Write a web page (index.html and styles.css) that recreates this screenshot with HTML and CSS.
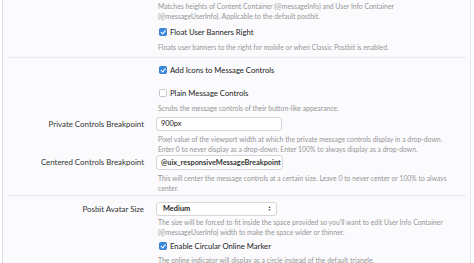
FILE: index.html
```html
<!DOCTYPE html>
<html>
<head>
<meta charset="utf-8">
<link rel="stylesheet" href="styles.css">
</head>
<body>
<div class="panel">
  <section class="block first">
    <div class="row">
      <div class="label"></div>
      <div class="field">
        <p class="hint">Matches heights of Content Container (@messageInfo) and User Info Container<br>(@messageUserInfo). Applicable to the default postbit.</p>
        <div class="check gap6"><span class="box on"></span>Float User Banners Right</div>
        <p class="hint gap5">Floats user banners to the right for mobile or when Classic Postbit is enabled.</p>
      </div>
    </div>
  </section>
  <section class="block second">
    <div class="row">
      <div class="label"></div>
      <div class="field">
        <div class="check"><span class="box on"></span>Add Icons to Message Controls</div>
        <div class="check gap13"><span class="box"></span>Plain Message Controls</div>
        <p class="hint gap5">Scrubs the message controls of their button-like appearance.</p>
      </div>
    </div>
    <div class="row gap4">
      <div class="label">Private Controls Breakpoint</div>
      <div class="field">
        <div class="input w126">900px</div>
        <p class="hint gap3">Pixel value of the viewport width at which the private message controls display in a drop-down.<br>Enter 0 to never display as a drop-down. Enter 100% to always display as a drop-down.</p>
      </div>
    </div>
    <div class="row gap1">
      <div class="label">Centered Controls Breakpoint</div>
      <div class="field">
        <div class="input w127 bold">@uix_responsiveMessageBreakpoint</div>
        <p class="hint gap3">This will center the message controls at a certain size. Leave 0 to never center or 100% to always<br>center.</p>
      </div>
    </div>
  </section>
  <section class="block third">
    <div class="row">
      <div class="label">Posbit Avatar Size</div>
      <div class="field">
        <div class="select">Medium<span class="arrows">&#9650;<br>&#9660;</span></div>
        <p class="hint gap2 lh9">The size will be forced to fit inside the space provided so you'll want to edit User Info Container<br>(@messageUserInfo) width to make the space wider or thinner.</p>
        <div class="check gap4"><span class="box on"></span>Enable Circular Online Marker</div>
        <p class="hint gap4">The online indicator will display as a circle instead of the default triangle.</p>
      </div>
    </div>
  </section>
</div>
</body>
</html>
```

FILE: styles.css
```css
html, body {
  margin: 0;
  padding: 0;
  background: #ffffff;
}
body {
  font-family: "Lato", "Liberation Sans", sans-serif;
  color: #2b2b2b;
  width: 474px;
  height: 263px;
  overflow: hidden;
}
.panel {
  margin-left: 2px;
  width: 467px;
  border-left: 1px solid #dcdde3;
  border-right: 1px solid #e6e7ec;
  background: #fbfbfd;
  height: 263px;
}
.block {
  margin: 0 4px 0 5px;
}
.block.first {
  padding-top: 1px;
  padding-bottom: 5px;
}
.block.second {
  border-top: 1px solid #e9e9ef;
  padding-top: 7px;
  padding-bottom: 2px;
}
.block.third {
  border-top: 1px solid #e9e9ef;
  padding-top: 6px;
}
.row {
  display: grid;
  grid-template-columns: 136px 1fr;
  column-gap: 14px;
}
.label {
  text-align: right;
  font-size: 7.9px;
  line-height: 14px;
  color: #333;
}
.field {
  min-width: 0;
}
.hint {
  margin: 0;
  font-size: 6.85px;
  line-height: 10px;
  color: #959595;
  white-space: nowrap;
}
.hint.lh9 {
  line-height: 9.5px;
}
.check {
  display: flex;
  align-items: center;
  height: 10px;
  font-size: 7.7px;
  color: #222;
}
.box {
  width: 6px;
  height: 6px;
  border: 1px solid #c4c4c8;
  border-radius: 1.5px;
  background: #ffffff;
  margin: 0 3px 0 1px;
  flex: none;
  position: relative;
}
.box.on {
  background: #3a8ae0;
  border-color: #3a7fcc;
}
.box.on::after {
  content: "";
  position: absolute;
  left: 2px;
  top: 0px;
  width: 1.5px;
  height: 3.5px;
  border: solid #ffffff;
  border-width: 0 1px 1px 0;
  transform: rotate(40deg);
}
.gap1 { margin-top: 1px; }
.gap2 { margin-top: 2px; }
.gap3 { margin-top: 3px; }
.gap4 { margin-top: 4px; }
.gap5 { margin-top: 5px; }
.gap6 { margin-top: 6px; }
.gap13 { margin-top: 13px; }
.input {
  box-sizing: border-box;
  height: 14px;
  line-height: 12px;
  border: 1px solid #d6d6da;
  border-radius: 3px;
  background: #ffffff;
  margin-left: -2px;
  padding-left: 4px;
  font-size: 7.4px;
  color: #222;
}
.w126 { width: 126px; }
.w127 { width: 127px; height: 15px; line-height: 13px; }
.input.bold { font-weight: 700; color: #333; }
.select {
  box-sizing: border-box;
  width: 121px;
  height: 14px;
  line-height: 12px;
  border: 1px solid #d6d6da;
  border-radius: 3px;
  background: #ffffff;
  margin-left: -2px;
  padding-left: 6px;
  font-size: 7.4px;
  font-weight: 700;
  color: #2a2a2a;
  display: flex;
  justify-content: space-between;
  align-items: center;
}
.arrows {
  font-size: 3px;
  line-height: 3px;
  margin-right: 5px;
  color: #222;
  text-align: center;
}
```
